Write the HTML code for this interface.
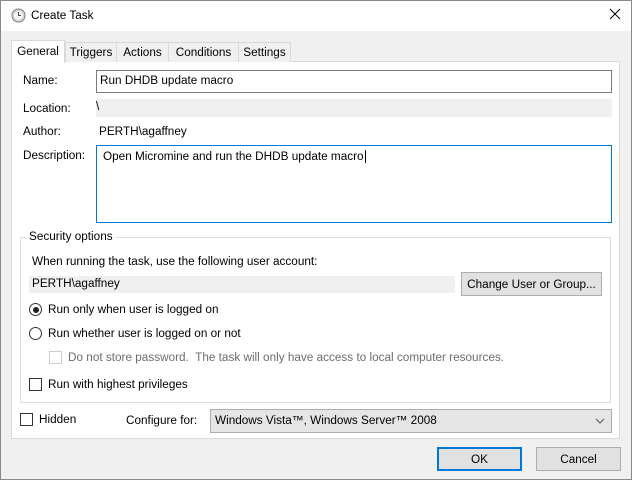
<!DOCTYPE html>
<html><head><style>
*{box-sizing:border-box;margin:0;padding:0}
body{width:632px;height:480px;overflow:hidden;font-family:"Liberation Sans",sans-serif;font-size:11.75px;color:#000;background:#f0f0f0;position:relative}
.a{position:absolute;white-space:nowrap}
.win{position:absolute;left:0;top:0;width:632px;height:480px;border:1px solid #888;}
.title{position:absolute;left:0;top:0;width:632px;height:31px;background:#fff}
.tab{position:absolute;top:42px;height:20px;border:1px solid #d9d9d9;border-bottom:none;background:#f0f0f0;padding:3px 0 0 0;text-align:center}
.panel{position:absolute;left:11px;top:61px;width:609px;height:378px;background:#fff;border:1px solid #d9d9d9}
.gray{background:#f0f0f0}
.btn{position:absolute;background:#e1e1e1;border:1px solid #adadad;text-align:center}
.cb{position:absolute;width:13px;height:13px;border:1px solid #333;background:#fff}
.rb{position:absolute;width:13px;height:13px;border:1px solid #333;border-radius:50%;background:#fff}
</style></head><body>
<div class="title"></div>
<svg class="a" style="left:11px;top:8px" width="15" height="15"><circle cx="7.5" cy="7.5" r="6.5" fill="#e8e8e8" stroke="#777"/><circle cx="7.5" cy="7.5" r="4.8" fill="#fafafa" stroke="#bbb" stroke-width=".6"/><path d="M7.5 4v3.5h2.5" stroke="#444" fill="none"/></svg>
<div class="a" style="left:31px;top:9px">Create Task</div>
<svg class="a" style="left:609px;top:8px" width="12" height="12"><path d="M1 1L11 11M11 1L1 11" stroke="#000" stroke-width="1"/></svg>
<div class="panel"></div>
<div class="tab" style="left:65px;width:52px">Triggers</div>
<div class="tab" style="left:116px;width:53px">Actions</div>
<div class="tab" style="left:168px;width:71px">Conditions</div>
<div class="tab" style="left:238px;width:53px">Settings</div>
<div class="tab" style="left:11px;top:40px;height:23px;width:54px;background:#fff;padding-top:4px">General</div>
<div class="a" style="left:23px;top:74px">Name:</div>
<div class="a" style="left:96px;top:70px;width:516px;height:23px;border:1px solid #7a7a7a;padding:3px 0 0 3px">Run DHDB update macro</div>
<div class="a" style="left:23px;top:102px">Location:</div>
<div class="a gray" style="left:96px;top:99px;width:516px;height:18px;padding:1px 0 0 0">\</div>
<div class="a" style="left:23px;top:125px">Author:</div>
<div class="a" style="left:99px;top:125px">PERTH\agaffney</div>
<div class="a" style="left:23px;top:149px">Description:</div>
<div class="a" style="left:96px;top:145px;width:516px;height:78px;border:1px solid #0078d7;padding:4px 0 0 6px">Open Micromine and run the DHDB update macro<span style="border-left:1px solid #000;margin-left:1px"></span></div>
<div class="a" style="left:20px;top:237px;width:591px;height:166px;border:1px solid #dcdcdc"></div>
<div class="a" style="left:26px;top:230px;background:#fff;padding:0 3px">Security options</div>
<div class="a" style="left:32px;top:255px">When running the task, use the following user account:</div>
<div class="a gray" style="left:29px;top:276px;width:426px;height:17px;padding:1px 0 0 3px">PERTH\agaffney</div>
<div class="btn" style="left:461px;top:272px;width:141px;height:24px;padding-top:5px">Change User or Group...</div>
<div class="rb" style="left:29px;top:303px"></div><div class="a" style="left:32.5px;top:306.5px;width:6px;height:6px;border-radius:50%;background:#222"></div>
<div class="a" style="left:48px;top:303px">Run only when user is logged on</div>
<div class="rb" style="left:29px;top:327px"></div>
<div class="a" style="left:48px;top:327px">Run whether user is logged on or not</div>
<div class="cb" style="left:49px;top:351px;border-color:#ccc"></div>
<div class="a" style="left:68px;top:351px;color:#6d6d6d">Do not store password.&nbsp; The task will only have access to local computer resources.</div>
<div class="cb" style="left:29px;top:378px"></div>
<div class="a" style="left:48px;top:378px">Run with highest privileges</div>
<div class="cb" style="left:20px;top:413px"></div>
<div class="a" style="left:39px;top:413px">Hidden</div>
<div class="a" style="left:126px;top:414px">Configure for:</div>
<div class="a" style="left:210px;top:409px;width:402px;height:24px;background:#e5e5e5;border:1px solid #adadad;padding:4px 0 0 4px">Windows Vista™, Windows Server™ 2008</div>
<svg class="a" style="left:595px;top:418px" width="10" height="6"><path d="M1 1L5 5L9 1" stroke="#555" fill="none"/></svg>
<div class="btn" style="left:437px;top:447px;width:85px;height:24px;border:2px solid #0078d7;padding-top:4px">OK</div>
<div class="btn" style="left:536px;top:447px;width:85px;height:24px;padding-top:5px">Cancel</div>
<div class="win"></div>
</body></html>
